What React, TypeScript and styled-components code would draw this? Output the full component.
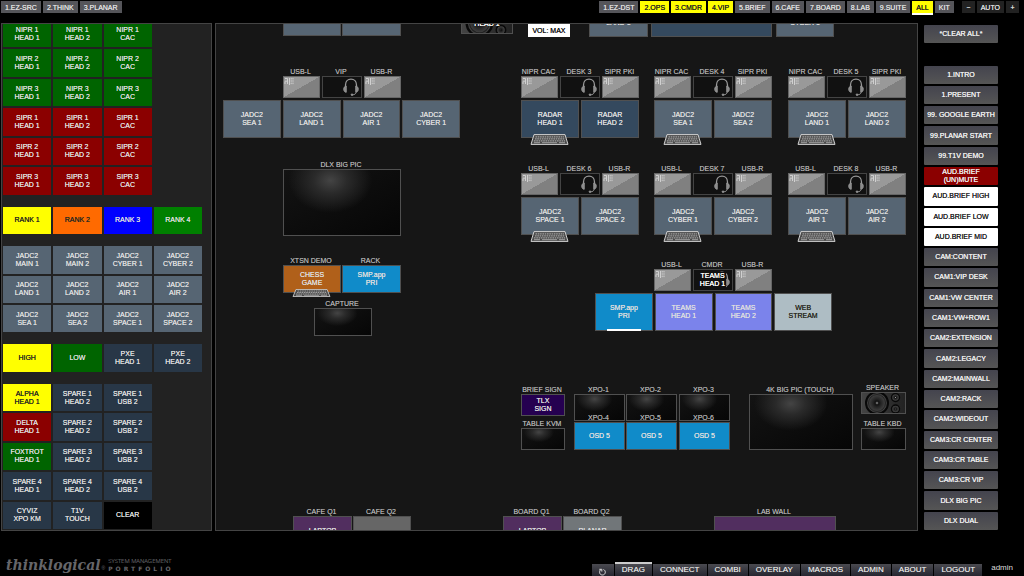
import React from 'react';
import styled, { createGlobalStyle, css } from 'styled-components';

const GlobalStyle = createGlobalStyle`
  *, *::before, *::after { box-sizing: border-box; }
  html, body { margin: 0; background: #000; }
  body, button {
    font-family: "Liberation Sans", Arial, Helvetica, sans-serif;
    font-size: 7px;
    line-height: 8px;
  }
  button { margin: 0; padding: 0; border: 0; cursor: pointer; text-shadow: 0 0 currentColor; }
`;

const palette = {
  green: '#006400',
  red: '#8b0000',
  yellow: '#ffff00',
  orange: '#ff6a00',
  blue: '#0000ff',
  rank: '#008000',
  steel: '#566573',
  navy: '#283747',
  radar: '#34495e',
  sky: '#108bc9',
  teams: '#7b83eb',
  web: '#aebdc4',
  chess: '#b0601a',
  sign: '#250050',
  plum: '#512e5f',
  grey: '#666666',
  planar: '#717679',
  black: '#000000',
};

type Tone = keyof typeof palette;

const darkText: Tone[] = ['yellow', 'orange', 'web'];
const inkFor = (tone: Tone) => (darkText.includes(tone) ? '#2a2a20' : '#dedede');

/* ---------- page frame ---------- */

const Screen = styled.div`
  display: flex;
  flex-direction: column;
  height: 100vh;
  min-height: 480px;
  overflow: hidden;
  color: #ccc;
`;

const TopBar = styled.header`
  display: flex;
  justify-content: space-between;
  align-items: flex-start;
  height: 23px;
  padding: 1px 5px 0 1px;
`;

const TabGroup = styled.nav`
  display: flex;
  align-items: flex-start;
  gap: 2px;
`;

const TopRight = styled.div`
  display: flex;
  align-items: flex-start;
  gap: 8px;
`;

const Tab = styled.button<{ $lit?: boolean; $current?: boolean }>`
  height: ${p => (p.$current ? 14 : 12)}px;
  padding: 1px 4px 0;
  line-height: 11px;
  color: ${p => (p.$lit ? '#222' : '#ddd')};
  background: ${p => (p.$lit ? '#ffff00' : '#55555a')};
  border-bottom: ${p => (p.$current ? '2px solid #fff' : '0')};
`;

const ZoomButton = styled(Tab)`
  min-width: 13px;
  background: #222;
`;

const Main = styled.main`
  display: flex;
  flex: 1;
  min-height: 0;
  padding: 0 26px 0 1px;
`;

const Panel = styled.section`
  border: 1px solid #444;
  overflow: hidden;
`;

/* ---------- sources ---------- */

const SourcePanel = styled(Panel)`
  display: flex;
  flex: none;
  width: 211px;
  margin-right: 3px;
  padding: 0 9px 1px 1px;
  background: #222;
`;

const SourceGrid = styled.div`
  display: grid;
  flex: 1;
  grid-template-columns: repeat(4, 1fr);
  grid-template-rows: repeat(6, 1fr) 8px 1fr 8px repeat(3, 1fr) 8px 1fr 8px repeat(5, 1fr);
  gap: 2px;
  margin-top: -4px;
`;

const SourceTile = styled.button<{ $tone: Tone; $column: number }>`
  grid-column: ${p => p.$column};
  white-space: pre-line;
  color: ${p => inkFor(p.$tone)};
  background: ${p => palette[p.$tone]};
`;

const GroupBreak = styled.div`
  grid-column: 1 / -1;
`;

/* ---------- room plan ---------- */

const RoomPlan = styled(Panel)`
  position: relative;
  flex: 1;
  min-width: 0;
  background: #161616;
`;

const Spot = styled.div<{ $x: number; $y: number; $w: number }>`
  position: absolute;
  left: ${p => p.$x}px;
  top: ${p => p.$y}px;
  width: ${p => p.$w}px;
  display: flex;
  flex-direction: column;
`;

const Caption = styled.span`
  display: flex;
  justify-content: center;
  height: 9px;
  padding-right: 2px;
  line-height: 10px;
  white-space: nowrap;
  color: #bbb;
  text-shadow: 0 0 #777;
`;

const darkGlass = css`
  background: radial-gradient(ellipse 36% 50% at 40% 16%, #444 0%, #2a2a2a 40%, transparent 100%),
    linear-gradient(150deg, #131313, #060606);
`;

const Display = styled.button<{ $tone?: Tone; $h: number }>`
  position: relative;
  height: ${p => p.$h}px;
  border: 1px solid #505050;
  white-space: pre-line;
  ${p =>
    p.$tone
      ? css`
          color: ${inkFor(p.$tone)};
          background: ${palette[p.$tone]};
        `
      : darkGlass}
`;

const DisplayRow = styled.div<{ $columns: number }>`
  display: grid;
  grid-template-columns: repeat(${p => p.$columns}, 1fr);
  gap: 2px;
`;

const SeatRow = styled.div`
  display: grid;
  grid-template-columns: 37px 40px 37px;
  justify-content: space-between;
  margin-bottom: 2px;
`;

const Seat = styled.div`
  display: flex;
  flex-direction: column;
`;

const UsbPort = styled.button`
  display: flex;
  height: 22px;
  border: 1px solid #666;
  background: linear-gradient(to bottom right, #999 50%, #808080 50%);
`;

const HeadsetSlot = styled.button`
  position: relative;
  height: 22px;
  border: 1px solid #444;
  background: #111;
  color: #fff;
  white-space: pre-line;
  display: flex;
  align-items: center;
  justify-content: flex-end;
  padding-right: 2px;
`;

const SlotText = styled.span`
  position: absolute;
  inset: 2px 6px 1px 5px;
  text-align: center;
  background: #111;
`;

const KeyboardBadge = styled.svg<{ $short?: boolean }>`
  position: absolute;
  left: 8px;
  bottom: ${p => (p.$short ? -5 : -8)}px;
  width: 39px;
  height: ${p => (p.$short ? 8 : 11)}px;
`;

const ActiveMark = styled.i`
  position: absolute;
  left: 11px;
  right: 11px;
  bottom: -1px;
  height: 2px;
  background: #fff;
`;

const VolumeButton = styled.button`
  height: 13px;
  color: #111;
  background: #fff;
`;

const SpeakerBox = styled.button`
  position: relative;
  display: flex;
  height: 22px;
  border: 1px solid #505050;
  background: linear-gradient(90deg, #444, #222);
  color: #fff;
`;

const SpeakerText = styled.span`
  position: absolute;
  inset: 7px 0 0;
  text-align: center;
`;

function UsbGlyph() {
  return (
    <svg width="10" height="9" viewBox="0 0 10 9" fill="none" stroke="#d0d0d0" strokeWidth="1">
      <path d="M1 1.500h2.500v5.500M1 4.500v2.500M1 4.200h2.500" />
      <path d="M5.500 1v7" />
      <path d="M7.200 1v7M9 1v7" strokeDasharray="1.400 .9" />
    </svg>
  );
}

function Headset() {
  return (
    <svg width="16" height="18" viewBox="0 0 16 18" fill="none" stroke="#999" strokeWidth="1">
      <path d="M2.500 9V7C2.500 3.500 4.800 1.200 8 1.200s5.500 2.300 5.500 5.800V9" strokeWidth="1.300" />
      <path d="M3.200 8v6.300C1.600 14 .8 13 .8 11.200S1.600 8.400 3.200 8z" fill="#888" />
      <path d="M12.800 8v6.300c1.600-.3 2.400-1.300 2.400-3.100s-.8-2.800-2.400-3.200z" fill="#888" />
      <path d="M13 14.500c-.3 1.600-1.700 2.300-3.600 2.300" />
      <circle cx="9" cy="16.700" r=".8" fill="#999" />
    </svg>
  );
}

function Keyboard({ short }: { short?: boolean }) {
  return (
    <KeyboardBadge $short={short} viewBox="0 0 39 11" preserveAspectRatio="none">
      <path d="M4 .6h31l3 9.800H1z" fill="#4a4a4a" stroke="#d0d0d0" strokeWidth="1" />
      <path
        d="M5.500 2.800h28.500M5 4.800h29.500M4 6.800h31"
        stroke="#a0a0a0"
        strokeWidth="1.200"
        strokeDasharray="1.600 .7"
      />
      <path d="M4 8.700h6M12 8.700h15M29 8.700h6" stroke="#a0a0a0" strokeWidth="1" />
    </KeyboardBadge>
  );
}

function SpeakerArt({ width }: { width: number }) {
  return (
    <svg width={width} height="20" viewBox="0 0 43 20" preserveAspectRatio="xMinYMid slice">
      <defs>
        <radialGradient id="cone">
          <stop offset="0" stopColor="#999" />
          <stop offset=".16" stopColor="#111" />
          <stop offset=".34" stopColor="#222" />
          <stop offset=".8" stopColor="#444" />
          <stop offset="1" stopColor="#333" />
        </radialGradient>
      </defs>
      <circle cx="15" cy="10" r="11" fill="url(#cone)" stroke="#080808" strokeWidth="2" />
      <circle cx="15" cy="10" r="8.500" fill="none" stroke="#222" strokeWidth="1" />
      <circle cx="33.500" cy="4.500" r="4" fill="url(#cone)" stroke="#080808" strokeWidth="1.400" />
      <circle cx="33.500" cy="16" r="4" fill="url(#cone)" stroke="#080808" strokeWidth="1.400" />
    </svg>
  );
}

type ScreenItem = { text: string; tone: Tone; keyboard?: boolean; active?: boolean };

function Screens({ items }: { items: ScreenItem[] }) {
  return (
    <DisplayRow $columns={items.length}>
      {items.map(s => (
        <Display key={s.text} $tone={s.tone} $h={38}>
          {s.text}
          {s.keyboard && <Keyboard />}
          {s.active && <ActiveMark />}
        </Display>
      ))}
    </DisplayRow>
  );
}

type DeskProps = {
  x: number;
  y: number;
  names: [string, string, string];
  slotText?: string;
  screens?: ScreenItem[];
};

function Desk({ x, y, names, slotText, screens }: DeskProps) {
  return (
    <Spot $x={x} $y={y} $w={118}>
      <SeatRow>
        <Seat>
          <Caption>{names[0]}</Caption>
          <UsbPort aria-label={names[0]}><UsbGlyph /></UsbPort>
        </Seat>
        <Seat>
          <Caption>{names[1]}</Caption>
          <HeadsetSlot aria-label={names[1]}>
            <Headset />
            {slotText && <SlotText>{slotText}</SlotText>}
          </HeadsetSlot>
        </Seat>
        <Seat>
          <Caption>{names[2]}</Caption>
          <UsbPort aria-label={names[2]}><UsbGlyph /></UsbPort>
        </Seat>
      </SeatRow>
      {screens && <Screens items={screens} />}
    </Spot>
  );
}

type Device = {
  x: number;
  y: number;
  w: number;
  h: number;
  name?: string;
  text?: string;
  tone?: Tone;
  keyboard?: boolean;
};

const pair = (a: string, b: string, tone: Tone = 'steel'): ScreenItem[] => [
  { text: a, tone, keyboard: true },
  { text: b, tone },
];

const desks: DeskProps[] = [
  { x: 67, y: 43, names: ['USB-L', 'VIP', 'USB-R'] },
  { x: 305, y: 43, names: ['NIPR CAC', 'DESK 3', 'SIPR PKI'], screens: pair('RADAR\nHEAD 1', 'RADAR\nHEAD 2', 'radar') },
  { x: 438, y: 43, names: ['NIPR CAC', 'DESK 4', 'SIPR PKI'], screens: pair('JADC2\nSEA 1', 'JADC2\nSEA 2') },
  { x: 572, y: 43, names: ['NIPR CAC', 'DESK 5', 'SIPR PKI'], screens: pair('JADC2\nLAND 1', 'JADC2\nLAND 2') },
  { x: 305, y: 140, names: ['USB-L', 'DESK 6', 'USB-R'], screens: pair('JADC2\nSPACE 1', 'JADC2\nSPACE 2') },
  { x: 438, y: 140, names: ['USB-L', 'DESK 7', 'USB-R'], screens: pair('JADC2\nCYBER 1', 'JADC2\nCYBER 2') },
  { x: 572, y: 140, names: ['USB-L', 'DESK 8', 'USB-R'], screens: pair('JADC2\nAIR 1', 'JADC2\nAIR 2') },
  { x: 438, y: 236, names: ['USB-L', 'CMDR', 'USB-R'], slotText: 'TEAMS\nHEAD 1' },
];

const vipScreens: ScreenItem[] = [
  { text: 'JADC2\nSEA 1', tone: 'steel' },
  { text: 'JADC2\nLAND 1', tone: 'steel' },
  { text: 'JADC2\nAIR 1', tone: 'steel' },
  { text: 'JADC2\nCYBER 1', tone: 'steel' },
];

const commanderScreens: ScreenItem[] = [
  { text: 'SMP.app\nPRI', tone: 'sky', active: true },
  { text: 'TEAMS\nHEAD 1', tone: 'teams' },
  { text: 'TEAMS\nHEAD 2', tone: 'teams' },
  { text: 'WEB\nSTREAM', tone: 'web' },
];

const devices: Device[] = [
  { x: 67, y: -15, w: 58, h: 27, tone: 'steel' },
  { x: 126, y: -15, w: 59, h: 27, tone: 'steel' },
  { x: 373, y: -15, w: 59, h: 28, text: 'LAND 1', tone: 'steel' },
  { x: 435, y: -15, w: 121, h: 28, tone: 'radar' },
  { x: 560, y: -15, w: 58, h: 28, text: 'CYBER 1', tone: 'steel' },
  { x: 67, y: 136, w: 118, h: 67, name: 'DLX BIG PIC' },
  { x: 67, y: 232, w: 58, h: 28, name: 'XTSN DEMO', text: 'CHESS\nGAME', tone: 'chess', keyboard: true },
  { x: 126, y: 232, w: 59, h: 28, name: 'RACK', text: 'SMP.app\nPRI', tone: 'sky' },
  { x: 98, y: 275, w: 58, h: 28, name: 'CAPTURE' },
  { x: 305, y: 361, w: 44, h: 22, name: 'BRIEF SIGN', text: 'TLX\nSIGN', tone: 'sign' },
  { x: 305, y: 395, w: 44, h: 22, name: 'TABLE KVM' },
  { x: 358, y: 361, w: 51, h: 27, name: 'XPO-1' },
  { x: 410, y: 361, w: 51, h: 27, name: 'XPO-2' },
  { x: 463, y: 361, w: 51, h: 27, name: 'XPO-3' },
  { x: 358, y: 389, w: 51, h: 28, name: 'XPO-4', text: 'OSD 5', tone: 'sky' },
  { x: 410, y: 389, w: 51, h: 28, name: 'XPO-5', text: 'OSD 5', tone: 'sky' },
  { x: 463, y: 389, w: 51, h: 28, name: 'XPO-6', text: 'OSD 5', tone: 'sky' },
  { x: 533, y: 361, w: 104, h: 56, name: '4K BIG PIC (TOUCH)' },
  { x: 645, y: 395, w: 45, h: 22, name: 'TABLE KBD' },
  { x: 77, y: 483, w: 59, h: 30, name: 'CAFE Q1', text: 'LAPTOP', tone: 'plum' },
  { x: 137, y: 483, w: 58, h: 30, name: 'CAFE Q2', tone: 'grey' },
  { x: 287, y: 483, w: 59, h: 30, name: 'BOARD Q1', text: 'LAPTOP', tone: 'plum' },
  { x: 347, y: 483, w: 59, h: 30, name: 'BOARD Q2', text: 'PLANAR', tone: 'planar' },
  { x: 498, y: 483, w: 122, h: 30, name: 'LAB WALL', tone: 'plum' },
];

/* ---------- macros ---------- */

const MacroList = styled.aside`
  display: grid;
  flex: none;
  width: 74px;
  margin: 2px 0 1px 6px;
  grid-template-rows: repeat(25, 1fr);
  gap: 2px;
`;

const macroLook = {
  plain: css`color: #eee; background: linear-gradient(#44444e, #555);`,
  alert: css`color: #eee; background: #8b0000;`,
  light: css`color: #222; background: #fff;`,
};

const Macro = styled.button<{ $look: keyof typeof macroLook; $row: number }>`
  grid-row: ${p => p.$row};
  min-height: 0;
  border-radius: 1px;
  white-space: pre-line;
  ${p => macroLook[p.$look]}
`;

/* ---------- footer ---------- */

const Footer = styled.footer`
  display: flex;
  align-items: flex-end;
  justify-content: space-between;
  height: 45px;
  padding: 0 11px 0 6px;
`;

const Brand = styled.div`
  display: flex;
  align-items: flex-start;
  height: 20px;
  color: #66666a;
`;

const BrandName = styled.span`
  font: italic bold 14px/18px "DejaVu Serif", serif;
`;

const BrandMark = styled.sup`
  font-size: 5px;
  line-height: 24px;
  margin: 0 3px 0 1px;
`;

const BrandLines = styled.span`
  display: flex;
  flex-direction: column;
  margin-top: 2px;
`;

const BrandThin = styled.span`
  font: 300 6px/7px "Open Sans", sans-serif;
  text-shadow: 0 0 currentColor;
`;

const BrandWide = styled.span`
  font: bold 6px/7px "DejaVu Sans", sans-serif;
  letter-spacing: 3px;
`;

const Menu = styled.nav`
  display: flex;
  align-items: flex-end;
  gap: 1px;
`;

const MenuButton = styled.button<{ $current?: boolean }>`
  height: ${p => (p.$current ? 14 : 12)}px;
  padding: 0 7px;
  font-size: 8px;
  line-height: 10px;
  color: #eee;
  background: linear-gradient(#4a4a50, #262630);
  border-top: ${p => (p.$current ? '2px solid #ccc' : '0')};
  text-shadow: 0 0 #888;
`;

const ReloadButton = styled(MenuButton)`
  display: flex;
  width: 22px;
  padding: 4px 0 0;
  justify-content: center;
`;

const User = styled.span`
  margin-left: 8px;
  height: 13px;
  font-size: 8px;
  line-height: 10px;
  color: #ddd;
`;

/* ---------- data ---------- */

type Source = [string, Tone];

const sourceGroups: Source[][][] = [
  [
    ...[1, 2, 3].map((n): Source[] => [
      [`NIPR ${n}\nHEAD 1`, 'green'],
      [`NIPR ${n}\nHEAD 2`, 'green'],
      [`NIPR ${n}\nCAC`, 'green'],
    ]),
    ...[1, 2, 3].map((n): Source[] => [
      [`SIPR ${n}\nHEAD 1`, 'red'],
      [`SIPR ${n}\nHEAD 2`, 'red'],
      [`SIPR ${n}\nCAC`, 'red'],
    ]),
  ],
  [[['RANK 1', 'yellow'], ['RANK 2', 'orange'], ['RANK 3', 'blue'], ['RANK 4', 'rank']]],
  [
    ['MAIN 1', 'MAIN 2', 'CYBER 1', 'CYBER 2'],
    ['LAND 1', 'LAND 2', 'AIR 1', 'AIR 2'],
    ['SEA 1', 'SEA 2', 'SPACE 1', 'SPACE 2'],
  ].map(row => row.map((name): Source => [`JADC2\n${name}`, 'steel'])),
  [[['HIGH', 'yellow'], ['LOW', 'green'], ['PXE\nHEAD 1', 'navy'], ['PXE\nHEAD 2', 'navy']]],
  [
    [['ALPHA\nHEAD 1', 'yellow'], ['SPARE 1\nHEAD 2', 'navy'], ['SPARE 1\nUSB 2', 'navy']],
    [['DELTA\nHEAD 1', 'red'], ['SPARE 2\nHEAD 2', 'navy'], ['SPARE 2\nUSB 2', 'navy']],
    [['FOXTROT\nHEAD 1', 'green'], ['SPARE 3\nHEAD 2', 'navy'], ['SPARE 3\nUSB 2', 'navy']],
    [['SPARE 4\nHEAD 1', 'navy'], ['SPARE 4\nHEAD 2', 'navy'], ['SPARE 4\nUSB 2', 'navy']],
    [['CYVIZ\nXPO KM', 'navy'], ['T1V\nTOUCH', 'navy'], ['CLEAR', 'black']],
  ],
];

const sourceTabs = ['1.EZ-SRC', '2.THINK', '3.PLANAR'];
const destTabs = [
  '1.EZ-DST', '2.OPS', '3.CMDR', '4.VIP', '5.BRIEF', '6.CAFE',
  '7.BOARD', '8.LAB', '9.SUITE', 'ALL', 'KIT',
];
const litTabs = ['2.OPS', '3.CMDR', '4.VIP', 'ALL'];

const macros = [
  '*CLEAR ALL*', '', '1.INTRO', '1.PRESENT', '99. GOOGLE EARTH', '99.PLANAR START', '99.T1V DEMO',
  'AUD.BRIEF\n(UN)MUTE', 'AUD.BRIEF HIGH', 'AUD.BRIEF LOW', 'AUD.BRIEF MID', 'CAM:CONTENT',
  'CAM1:VIP DESK', 'CAM1:VW CENTER', 'CAM1:VW+ROW1', 'CAM2:EXTENSION', 'CAM2:LEGACY',
  'CAM2:MAINWALL', 'CAM2:RACK', 'CAM2:WIDEOUT', 'CAM3:CR CENTER', 'CAM3:CR TABLE',
  'CAM3:CR VIP', 'DLX BIG PIC', 'DLX DUAL',
];

const macroKind = (name: string): keyof typeof macroLook =>
  name.includes('MUTE') ? 'alert' : name.startsWith('AUD') ? 'light' : 'plain';

const menu = ['DRAG', 'CONNECT', 'COMBI', 'OVERLAY', 'MACROS', 'ADMIN', 'ABOUT', 'LOGOUT'];

export default function App() {
  return (
    <Screen>
      <GlobalStyle />
      <TopBar>
        <TabGroup>
          {sourceTabs.map(t => <Tab key={t}>{t}</Tab>)}
        </TabGroup>
        <TopRight>
          <TabGroup>
            {destTabs.map(t => (
              <Tab key={t} $lit={litTabs.includes(t)} $current={t === 'ALL'}>{t}</Tab>
            ))}
          </TabGroup>
          <TabGroup>
            <ZoomButton>−</ZoomButton>
            <ZoomButton>AUTO</ZoomButton>
            <ZoomButton>+</ZoomButton>
          </TabGroup>
        </TopRight>
      </TopBar>

      <Main>
        <SourcePanel>
          <SourceGrid>
            {sourceGroups.map((group, g) => (
              <React.Fragment key={g}>
                {g > 0 && <GroupBreak />}
                {group.map(row =>
                  row.map(([text, tone], i) => (
                    <SourceTile key={text} $tone={tone} $column={i + 1}>{text}</SourceTile>
                  )),
                )}
              </React.Fragment>
            ))}
          </SourceGrid>
        </SourcePanel>

        <RoomPlan>
          {devices.map((d, i) => (
            <Spot key={i} $x={d.x} $y={d.y} $w={d.w}>
              {d.name && <Caption>{d.name}</Caption>}
              <Display $tone={d.tone} $h={d.h} aria-label={d.text ? undefined : d.name}>
                {d.text}
                {d.keyboard && <Keyboard short />}
              </Display>
            </Spot>
          ))}
          <Spot $x={245} $y={-12} $w={52}>
            <SpeakerBox>
              <SpeakerArt width={50} />
              <SpeakerText>HEAD 1</SpeakerText>
            </SpeakerBox>
          </Spot>
          <Spot $x={312} $y={0} $w={42}>
            <VolumeButton>VOL: MAX</VolumeButton>
          </Spot>
          <Spot $x={645} $y={359} $w={45}>
            <Caption>SPEAKER</Caption>
            <SpeakerBox aria-label="SPEAKER"><SpeakerArt width={43} /></SpeakerBox>
          </Spot>
          {desks.map(d => <Desk key={d.names[1]} {...d} />)}
          <Spot $x={7} $y={76} $w={237}><Screens items={vipScreens} /></Spot>
          <Spot $x={379} $y={269} $w={237}><Screens items={commanderScreens} /></Spot>
        </RoomPlan>

        <MacroList>
          {macros.map((m, i) =>
            m ? <Macro key={m} $look={macroKind(m)} $row={i + 1}>{m}</Macro> : null,
          )}
        </MacroList>
      </Main>

      <Footer>
        <Brand>
          <BrandName>thinklogical</BrandName>
          <BrandMark>®</BrandMark>
          <BrandLines>
            <BrandThin>SYSTEM MANAGEMENT</BrandThin>
            <BrandWide>PORTFOLIO</BrandWide>
          </BrandLines>
        </Brand>
        <Menu>
          <ReloadButton aria-label="Reload">
            <svg width="7" height="8" viewBox="0 0 7 8" fill="none" stroke="#ddd" strokeWidth="1">
              <path d="M2 1.500C.9 2.100.6 3 .6 4.200c0 1.700 1.200 2.800 2.800 2.800s2.900-1.100 2.900-2.800c0-1.300-.7-2.200-1.800-2.700M.3 1.300h2.500v2.200" />
            </svg>
          </ReloadButton>
          {menu.map(m => <MenuButton key={m} $current={m === 'DRAG'}>{m}</MenuButton>)}
          <User>admin</User>
        </Menu>
      </Footer>
    </Screen>
  );
}
